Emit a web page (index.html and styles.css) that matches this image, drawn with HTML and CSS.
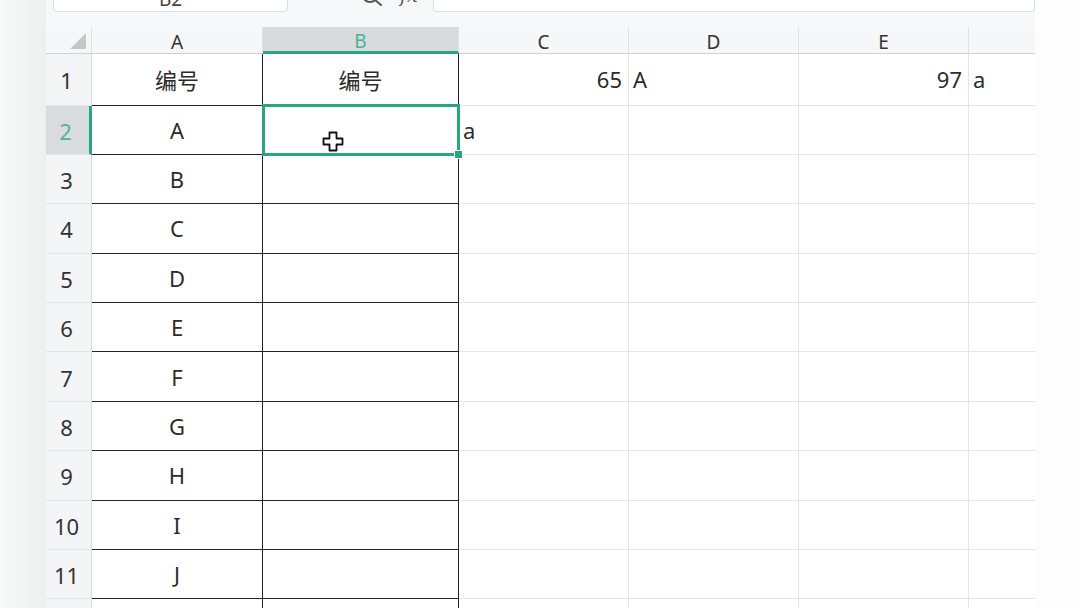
FILE: index.html
```html
<!DOCTYPE html>
<html lang="zh-CN">

<head>
    <meta charset="UTF-8" />
    <title>编号 - 表格</title>
    <link rel="stylesheet" href="styles.css">
</head>

<body>
    <div class="app">
        <div class="side"></div>

        <div class="main">
            <div class="formula-bar">
                <div class="name-box">B2</div>
                <svg class="search-icon" width="26" height="20" viewBox="0 0 26 20">
                    <circle cx="10" cy="-3" r="7" fill="none" stroke="#555" stroke-width="2" />
                    <line x1="15" y1="2" x2="21" y2="7" stroke="#555" stroke-width="2" stroke-linecap="round" />
                </svg>
                <span class="fx">fx</span>
                <div class="formula-input"></div>
            </div>

            <div class="sheet">
                <!-- column headers -->
                <div class="corner"><span class="tri"></span></div>
                <div class="ch">A</div>
                <div class="ch active">B</div>
                <div class="ch">C</div>
                <div class="ch">D</div>
                <div class="ch">E</div>
                <div class="ch last"></div>

                <!-- row 1 -->
                <div class="rh">1</div>
                <div class="c ab">编号</div>
                <div class="c ab">编号</div>
                <div class="c num">65</div>
                <div class="c lt">A</div>
                <div class="c num">97</div>
                <div class="c lt last">a</div>

                <!-- row 2 -->
                <div class="rh active">2</div>
                <div class="c ab">A</div>
                <div class="c ab sel">
                    <div class="selection"></div>
                    <div class="fill-handle"></div>
                    <svg class="cursor" width="24" height="22" viewBox="0 0 24 22">
                        <path d="M8.5 2.5h7v6h6v6h-6v6h-7v-6h-6v-6h6z" fill="#fff" stroke="#111" stroke-width="1.8" stroke-linejoin="round" />
                    </svg>
                </div>
                <div class="c lt">a</div>
                <div class="c"></div>
                <div class="c"></div>
                <div class="c last"></div>

                <div class="rh">3</div>
                <div class="c ab">B</div>
                <div class="c ab"></div>
                <div class="c"></div><div class="c"></div><div class="c"></div><div class="c last"></div>

                <div class="rh">4</div>
                <div class="c ab">C</div>
                <div class="c ab"></div>
                <div class="c"></div><div class="c"></div><div class="c"></div><div class="c last"></div>

                <div class="rh">5</div>
                <div class="c ab">D</div>
                <div class="c ab"></div>
                <div class="c"></div><div class="c"></div><div class="c"></div><div class="c last"></div>

                <div class="rh">6</div>
                <div class="c ab">E</div>
                <div class="c ab"></div>
                <div class="c"></div><div class="c"></div><div class="c"></div><div class="c last"></div>

                <div class="rh">7</div>
                <div class="c ab">F</div>
                <div class="c ab"></div>
                <div class="c"></div><div class="c"></div><div class="c"></div><div class="c last"></div>

                <div class="rh">8</div>
                <div class="c ab">G</div>
                <div class="c ab"></div>
                <div class="c"></div><div class="c"></div><div class="c"></div><div class="c last"></div>

                <div class="rh">9</div>
                <div class="c ab">H</div>
                <div class="c ab"></div>
                <div class="c"></div><div class="c"></div><div class="c"></div><div class="c last"></div>

                <div class="rh">10</div>
                <div class="c ab">I</div>
                <div class="c ab"></div>
                <div class="c"></div><div class="c"></div><div class="c"></div><div class="c last"></div>

                <div class="rh">11</div>
                <div class="c ab">J</div>
                <div class="c ab"></div>
                <div class="c"></div><div class="c"></div><div class="c"></div><div class="c last"></div>

                <div class="rh"></div>
                <div class="c ab"></div>
                <div class="c ab"></div>
                <div class="c"></div><div class="c"></div><div class="c"></div><div class="c last"></div>
            </div>
        </div>

        <div class="blank"></div>
    </div>
</body>

</html>
```

FILE: styles.css
```css
body {
    font-family: "Noto Sans", "Noto Sans CJK SC", sans-serif;
    background-color: #fdfdfe;
    color: #2b2b2b;
    margin: 0;
    padding: 0;
    overflow: hidden;
}

.app {
    display: flex;
    width: 1080px;
    height: 608px;
    overflow: hidden;
}

.side {
    width: 46px;
    flex-shrink: 0;
    background: linear-gradient(to right, #f8f9f9, #eef0ef);
}

.main {
    width: 989px;
    flex-shrink: 0;
    display: flex;
    flex-direction: column;
    background-color: #f7f8fa;
}

.blank {
    flex: 1;
    background-color: #fdfdfe;
}

/* formula bar (top cut off) */
.formula-bar {
    height: 27px;
    display: flex;
    align-items: flex-start;
    flex-shrink: 0;
}

.name-box {
    margin-left: 7px;
    margin-top: -14px;
    width: 235px;
    height: 26px;
    box-sizing: border-box;
    background-color: #fff;
    border: 1px solid #dcdfe3;
    border-radius: 4px;
    text-align: center;
    font-size: 19px;
    line-height: 24px;
    color: #444;
}

.search-icon {
    margin-left: 72px;
    margin-top: -2px;
}

.fx {
    margin-left: 14px;
    margin-top: -16px;
    font-family: "DejaVu Serif", serif;
    font-style: italic;
    font-size: 19px;
    color: #555;
}

.formula-input {
    margin-left: 15px;
    margin-top: -14px;
    flex: 1;
    height: 26px;
    box-sizing: border-box;
    background-color: #fff;
    border: 1px solid #dcdfe3;
    border-radius: 4px;
}

/* grid */
.sheet {
    flex: 1;
    display: grid;
    grid-template-columns: 46px 171px 196px 170px 170px 170px 66px;
    grid-template-rows: 27px 51.5px repeat(11, 49.4px);
    overflow: hidden;
    background-color: #fff;
}

.corner,
.ch {
    background-color: #f6f7f9;
    border-bottom: 1.5px solid #cfd2d7;
    border-right: 1px solid #dee1e5;
    box-sizing: border-box;
    display: flex;
    align-items: center;
    justify-content: center;
    padding-top: 4px;
    font-size: 19px;
    color: #333;
}

.ch.last {
    border-right: none;
}

.ch.active {
    background-color: #d8dadd;
    color: #44b78f;
    border-bottom: 3px solid #2aa57e;
}

.corner {
    position: relative;
}

.tri {
    position: absolute;
    right: 5px;
    bottom: 4px;
    width: 0;
    height: 0;
    border-left: 16px solid transparent;
    border-bottom: 16px solid #c4c6c8;
}

.rh {
    background-color: #f4f5f7;
    border-right: 1px solid #d6d9de;
    border-bottom: 1px solid #e2e5e9;
    box-sizing: border-box;
    display: flex;
    align-items: center;
    justify-content: center;
    padding-right: 4px;
    padding-top: 2px;
    font-size: 22px;
    color: #333;
}

.rh.active {
    background-color: #d9dbde;
    color: #4cb894;
    border-right: 3px solid #2aa57e;
}

.c {
    border-right: 1px solid #e3e5e9;
    border-bottom: 1px solid #e3e5e9;
    box-sizing: border-box;
    display: flex;
    align-items: center;
    justify-content: center;
    font-size: 22px;
    white-space: nowrap;
}

.c.last {
    border-right: none;
}

.c.ab {
    border-right: 1.5px solid #222;
    border-bottom: 1.5px solid #222;
}

.c.num {
    justify-content: flex-end;
    padding-right: 6px;
}

.c.lt {
    justify-content: flex-start;
    padding-left: 4px;
}

/* active cell */
.sel {
    position: relative;
}

.selection {
    position: absolute;
    left: -1px;
    top: -2px;
    right: -2px;
    bottom: -2px;
    border: 3px solid #2aa57e;
}

.fill-handle {
    position: absolute;
    right: -5px;
    bottom: -5px;
    width: 7px;
    height: 7px;
    background-color: #2aa57e;
    border: 1px solid #fff;
}

.cursor {
    position: absolute;
    left: 58px;
    top: 24px;
}
```
